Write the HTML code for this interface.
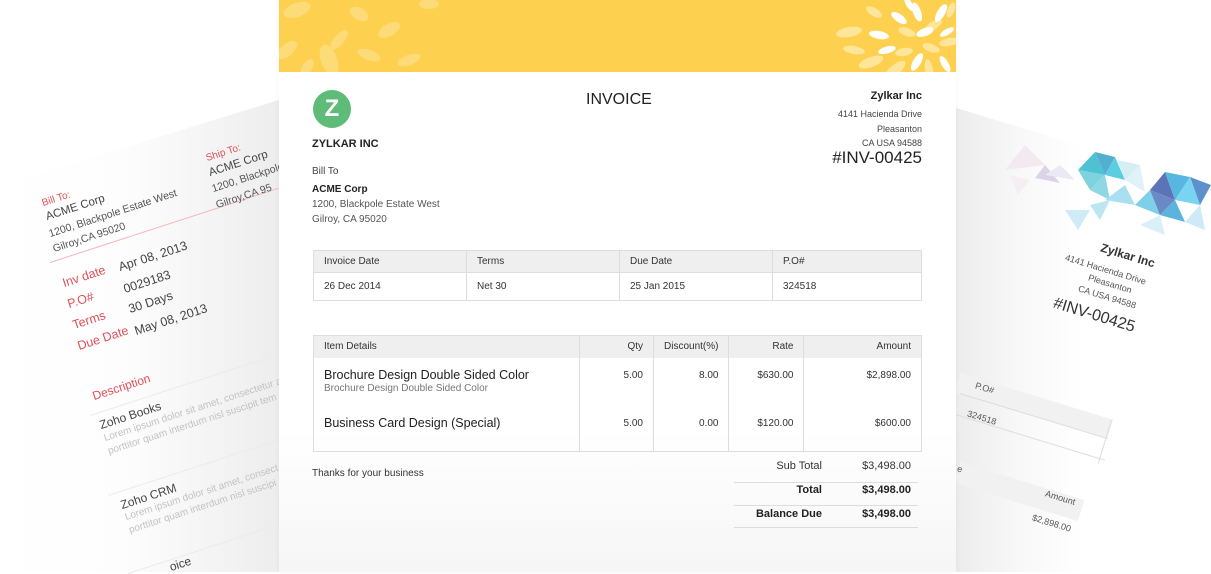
<!DOCTYPE html>
<html><head><meta charset="utf-8">
<style>
*{margin:0;padding:0;box-sizing:border-box}
html,body{width:1211px;height:572px;overflow:hidden;background:#fff;font-family:"Liberation Sans",sans-serif;color:#333}
.abs{position:absolute;white-space:nowrap}
.lp{position:absolute;left:0;top:0;width:279px;height:572px;background:linear-gradient(90deg,#fff 0%,#fdfdfd 45%,#ededed 100%);clip-path:polygon(0 186px,279px 100px,279px 572px,0 572px)}
.rp{position:absolute;left:956px;top:0;width:255px;height:572px;background:linear-gradient(90deg,#ececec 0%,#f8f8f8 25%,#fff 50%);clip-path:polygon(0 108px,255px 185px,255px 572px,0 572px)}
.rl{transform:rotate(-18deg);transform-origin:0 100%}
.rr{transform:rotate(17deg);transform-origin:0 100%}
.red{color:#e0505a}
.page{position:absolute;left:279px;top:0;width:677px;height:572px;background:linear-gradient(180deg,#fff 0%,#fff 75%,#f6f6f6 100%);box-shadow:0 0 5px rgba(0,0,0,.06)}
.hdr{position:absolute;left:0;top:0;width:677px;height:72px;background:#fdd14f;overflow:hidden}
table{border-collapse:collapse;position:absolute;font-size:10px;color:#333}
td{border:1px solid #ddd;padding:0 10px}
th{font-weight:normal;background:#efefef;border:1px solid #ddd;border-bottom:none;padding:0 10px;height:22px;text-align:left}
</style></head><body>

<div class="lp"></div>
<div class="abs" style="left:50px;top:262px;width:240px;height:1px;background:#f0b8bc;transform:rotate(-18deg);transform-origin:0 0"></div>
<div class="abs rl red" style="left:44px;top:198px;font-size:10px">Bill To:</div>
<div class="abs rl" style="left:48px;top:211px;font-size:11.5px;color:#444">ACME Corp</div>
<div class="abs rl" style="left:51px;top:228px;font-size:10.5px;color:#555">1200, Blackpole Estate West</div>
<div class="abs rl" style="left:55px;top:243px;font-size:10.5px;color:#555">Gilroy,CA 95020</div>
<div class="abs rl red" style="left:208px;top:153px;font-size:10px">Ship To:</div>
<div class="abs rl" style="left:211px;top:167px;font-size:11.5px;color:#444">ACME Corp</div>
<div class="abs rl" style="left:214px;top:183px;font-size:10.5px;color:#555">1200, Blackpole</div>
<div class="abs rl" style="left:218px;top:199px;font-size:10.5px;color:#555">Gilroy,CA 95</div>
<div class="abs rl red" style="left:65px;top:276px;font-size:12.5px">Inv date</div>
<div class="abs rl" style="left:121px;top:260px;font-size:12.5px;color:#444">Apr 08, 2013</div>
<div class="abs rl red" style="left:70px;top:297px;font-size:12.5px">P.O#</div>
<div class="abs rl" style="left:126px;top:282px;font-size:12.5px;color:#444">0029183</div>
<div class="abs rl red" style="left:75px;top:318px;font-size:12.5px">Terms</div>
<div class="abs rl" style="left:131px;top:302px;font-size:12.5px;color:#444">30 Days</div>
<div class="abs rl red" style="left:80px;top:339px;font-size:12.5px">Due Date</div>
<div class="abs rl" style="left:137px;top:324px;font-size:12.5px;color:#444">May 08, 2013</div>
<div class="abs rl red" style="left:95px;top:389px;font-size:12px">Description</div>
<div class="abs" style="left:90px;top:415px;width:200px;height:1px;background:#ebebeb;transform:rotate(-18deg);transform-origin:0 0"></div>
<div class="abs rl" style="left:102px;top:418px;font-size:12px;color:#444">Zoho Books</div>
<div class="abs rl" style="left:106px;top:433px;font-size:10px;color:#c2c2c2">Lorem ipsum dolor sit amet, consectetur a</div>
<div class="abs rl" style="left:110px;top:446px;font-size:10px;color:#c2c2c2">porttitor quam interdum nisl suscipit tem</div>
<div class="abs" style="left:108px;top:495px;width:190px;height:1px;background:#ebebeb;transform:rotate(-18deg);transform-origin:0 0"></div>
<div class="abs rl" style="left:123px;top:498px;font-size:12px;color:#444">Zoho CRM</div>
<div class="abs rl" style="left:127px;top:512px;font-size:10px;color:#c2c2c2">Lorem ipsum dolor sit amet, consect</div>
<div class="abs rl" style="left:131px;top:525px;font-size:10px;color:#c2c2c2">porttitor quam interdum nisl suscipi</div>
<div class="abs" style="left:128px;top:573px;width:170px;height:1px;background:#ebebeb;transform:rotate(-18deg);transform-origin:0 0"></div>
<div class="abs rl" style="left:172px;top:560px;font-size:12px;color:#444">oice</div>

<div class="rp"></div>
<svg class="abs" style="left:1000px;top:130px" width="211" height="110" viewBox="0 0 211 110">
<g>
<polygon points="25,15 45,35 5,40" fill="#f3eaf1"/>
<polygon points="45,35 60,53 35,48" fill="#dcd3e8"/>
<polygon points="60,35 75,50 45,45" fill="#eaeaf5"/>
<polygon points="10,45 30,50 18,65" fill="#f6eef3"/>
<polygon points="78,40 95,22 105,45" fill="#4ec2d2"/>
<polygon points="95,22 115,27 105,45" fill="#53afd0"/>
<polygon points="105,45 115,27 125,50" fill="#5ccde0"/>
<polygon points="78,40 105,45 90,60" fill="#7fd3df"/>
<polygon points="90,60 105,45 110,70" fill="#8fd8e3"/>
<polygon points="117,30 140,35 125,50" fill="#d4eef4"/>
<polygon points="105,70 125,55 135,75" fill="#a9dff0"/>
<polygon points="125,50 140,35 145,62" fill="#e0f2f8"/>
<polygon points="65,80 90,80 78,100" fill="#cdecf5"/>
<polygon points="90,75 110,70 100,90" fill="#bde6f2"/>
<polygon points="135,75 150,60 160,85" fill="#7dd0e8"/>
<polygon points="150,60 165,42 175,70" fill="#5c73b8"/>
<polygon points="165,42 190,47 175,70" fill="#58b7e0"/>
<polygon points="190,47 211,55 200,75" fill="#5d90cc"/>
<polygon points="175,70 190,47 200,75" fill="#79d4f2"/>
<polygon points="150,60 175,70 160,85" fill="#6a8ac6"/>
<polygon points="160,85 175,70 185,92" fill="#5cb4de"/>
<polygon points="185,92 200,75 205,100" fill="#cdeaf6"/>
<polygon points="140,95 160,85 165,105" fill="#d9f0f9"/>
</g></svg>
<div class="abs rr" style="left:1099px;top:240px;font-size:12px;font-weight:bold;color:#333">Zylkar Inc</div>
<div class="abs rr" style="left:1064px;top:252px;font-size:9px;color:#555">4141 Hacienda Drive</div>
<div class="abs rr" style="left:1087px;top:272px;font-size:9px;color:#555">Pleasanton</div>
<div class="abs rr" style="left:1077px;top:283px;font-size:9px;color:#555">CA USA 94588</div>
<div class="abs rr" style="left:1051px;top:294px;font-size:16px;color:#333">#INV-00425</div>
<div class="abs" style="left:960px;top:373px;width:160px;height:20px;background:#f1f1f1;transform:rotate(17deg);transform-origin:0 0"></div>
<div class="abs" style="left:960px;top:393px;width:155px;height:1px;background:#ddd;transform:rotate(17deg);transform-origin:0 0"></div>
<div class="abs" style="left:952px;top:413px;width:160px;height:1px;background:#ddd;transform:rotate(17deg);transform-origin:0 0"></div>
<div class="abs" style="left:1111px;top:420px;width:1px;height:45px;background:#ddd;transform:rotate(17deg);transform-origin:0 0"></div>
<div class="abs rr" style="left:974px;top:380px;font-size:9px;color:#555">P.O#</div>
<div class="abs rr" style="left:966px;top:408px;font-size:9px;color:#555">324518</div>
<div class="abs" style="left:960px;top:462px;width:130px;height:22px;background:#f1f1f1;transform:rotate(17deg);transform-origin:0 0"></div>
<div class="abs rr" style="left:1044px;top:488px;font-size:9px;color:#555">Amount</div>
<div class="abs rr" style="left:1031px;top:512px;font-size:9px;color:#555">$2,898.00</div>
<div class="abs rr" style="left:956px;top:463px;font-size:9px;color:#555">e</div>

<div class="page">
 <div class="hdr">
  <svg width="677" height="72" viewBox="0 0 677 72">
   <g fill="#fee08a" opacity=".7">
    <ellipse cx="18" cy="10" rx="14" ry="7" transform="rotate(-20 18 10)"/>
    <ellipse cx="80" cy="14" rx="10" ry="6" transform="rotate(30 80 14)"/>
    <ellipse cx="60" cy="40" rx="12" ry="5" transform="rotate(-50 60 40)"/>
    <ellipse cx="50" cy="60" rx="16" ry="8" transform="rotate(70 50 60)"/>
    <ellipse cx="8" cy="50" rx="12" ry="6" transform="rotate(-40 8 50)"/>
    <ellipse cx="110" cy="30" rx="12" ry="6" transform="rotate(-30 110 30)"/>
    <ellipse cx="90" cy="55" rx="12" ry="5" transform="rotate(20 90 55)"/>
    <ellipse cx="28" cy="68" rx="10" ry="5" transform="rotate(-60 28 68)"/>
    <ellipse cx="130" cy="60" rx="12" ry="5" transform="rotate(-20 130 60)"/>
    <ellipse cx="150" cy="4" rx="10" ry="5"/>
   </g>
   <g transform="translate(640 40)">
    <g fill="#fee59a">
     <ellipse cx="-70" cy="-8" rx="13" ry="5" transform="rotate(-10 -70 -8)"/>
     <ellipse cx="-65" cy="10" rx="11" ry="4" transform="rotate(10 -65 10)"/>
     <ellipse cx="-48" cy="22" rx="13" ry="5" transform="rotate(-20 -48 22)"/>
     <ellipse cx="-24" cy="30" rx="13" ry="5" transform="rotate(-40 -24 30)"/>
     <ellipse cx="15" cy="-15" rx="9" ry="4" transform="rotate(-30 15 -15)"/>
     <ellipse cx="-12" cy="-8" rx="9" ry="4" transform="rotate(20 -12 -8)"/>
     <ellipse cx="12" cy="8" rx="9" ry="4" transform="rotate(20 12 8)"/>
     <ellipse cx="-15" cy="12" rx="9" ry="4" transform="rotate(-10 -15 12)"/>
     <ellipse cx="30" cy="2" rx="10" ry="4" transform="rotate(-10 30 2)"/>
     <ellipse cx="-45" cy="-28" rx="9" ry="4" transform="rotate(30 -45 -28)"/>
     <ellipse cx="10" cy="30" rx="11" ry="4" transform="rotate(80 10 30)"/>
     <ellipse cx="32" cy="-30" rx="8" ry="3.5" transform="rotate(-70 32 -30)"/>
    </g>
    <g fill="#fff">
     <ellipse cx="-40" cy="-5" rx="10" ry="4" transform="rotate(10 -40 -5)"/>
     <ellipse cx="-20" cy="-22" rx="9" ry="4" transform="rotate(35 -20 -22)"/>
     <ellipse cx="-2" cy="-28" rx="10" ry="4" transform="rotate(70 -2 -28)"/>
     <ellipse cx="22" cy="-27" rx="10" ry="4" transform="rotate(-60 22 -27)"/>
     <ellipse cx="-32" cy="10" rx="9" ry="3.5" transform="rotate(-15 -32 10)"/>
     <ellipse cx="6" cy="-8" rx="9" ry="4" transform="rotate(-20 6 -8)"/>
     <ellipse cx="-2" cy="22" rx="10" ry="4" transform="rotate(-60 -2 22)"/>
     <ellipse cx="26" cy="24" rx="9" ry="3.5" transform="rotate(60 26 24)"/>
     <ellipse cx="-10" cy="-36" rx="8" ry="3" transform="rotate(60 -10 -36)"/>
     <ellipse cx="28" cy="-8" rx="8" ry="3" transform="rotate(-30 28 -8)"/>
    </g>
   </g>
  </svg>
 </div>
 <div class="abs" style="left:34px;top:90px;width:38px;height:38px;border-radius:50%;background:#5ebc78;color:#fff;font-weight:bold;font-size:24px;text-align:center;line-height:38px">Z</div>
 <div class="abs" style="left:33px;top:138px;font-size:11px;font-weight:bold;color:#222">ZYLKAR INC</div>
 <div class="abs" style="left:33px;top:166px;font-size:10px;color:#444">Bill To</div>
 <div class="abs" style="left:33px;top:184px;font-size:10px;font-weight:bold;color:#222">ACME Corp</div>
 <div class="abs" style="left:33px;top:199px;font-size:10px;color:#555">1200, Blackpole Estate West</div>
 <div class="abs" style="left:33px;top:214px;font-size:10px;color:#555">Gilroy, CA 95020</div>
 <div class="abs" style="left:307px;top:91px;font-size:16px;color:#222">INVOICE</div>
 <div class="abs" style="right:34px;top:90px;font-size:11px;font-weight:bold;color:#222;text-align:right">Zylkar Inc</div>
 <div class="abs" style="right:34px;top:107px;font-size:9px;color:#444;text-align:right;line-height:14.7px">4141 Hacienda Drive<br>Pleasanton<br>CA USA 94588</div>
 <div class="abs" style="right:34px;top:148px;font-size:17px;color:#222">#INV-00425</div>

 <table style="left:34px;top:250px;width:609px">
  <tr><th style="width:153px">Invoice Date</th><th style="width:153px">Terms</th><th style="width:153px">Due Date</th><th>P.O#</th></tr>
  <tr style="height:28px"><td>26 Dec 2014</td><td>Net 30</td><td>25 Jan 2015</td><td>324518</td></tr>
 </table>

 <table style="left:34px;top:335px;width:609px">
  <tr><th style="width:266px">Item Details</th><th style="width:74px;text-align:right">Qty</th><th style="width:75px;text-align:right">Discount(%)</th><th style="width:75px;text-align:right">Rate</th><th style="text-align:right">Amount</th></tr>
  <tr style="height:48px;vertical-align:top"><td style="border-bottom:none;border-top:none;padding-top:10px"><div style="font-size:12.5px;color:#222">Brochure Design Double Sided Color</div><div style="font-size:10px;color:#777;margin-top:1px">Brochure Design Double Sided Color</div></td><td style="border-bottom:none;border-top:none;text-align:right;padding-top:12px">5.00</td><td style="border-bottom:none;border-top:none;text-align:right;padding-top:12px">8.00</td><td style="border-bottom:none;border-top:none;text-align:right;padding-top:12px">$630.00</td><td style="border-bottom:none;border-top:none;text-align:right;padding-top:12px">$2,898.00</td></tr>
  <tr style="height:46px;vertical-align:top"><td style="border-top:none;padding-top:10px"><div style="font-size:12.5px;color:#222">Business Card Design (Special)</div></td><td style="border-top:none;text-align:right;padding-top:12px">5.00</td><td style="border-top:none;text-align:right;padding-top:12px">0.00</td><td style="border-top:none;text-align:right;padding-top:12px">$120.00</td><td style="border-top:none;text-align:right;padding-top:12px">$600.00</td></tr>
 </table>

 <div class="abs" style="left:33px;top:468px;font-size:10px;color:#333">Thanks for your business</div>
 <div class="abs" style="right:134px;top:460px;font-size:11px;color:#333;text-align:right">Sub Total</div>
 <div class="abs" style="right:45px;top:460px;font-size:11px;color:#333">$3,498.00</div>
 <div class="abs" style="left:455px;top:482px;width:184px;height:1px;background:#ddd"></div>
 <div class="abs" style="right:134px;top:484px;font-size:11px;font-weight:bold;color:#222">Total</div>
 <div class="abs" style="right:45px;top:484px;font-size:11px;font-weight:bold;color:#222">$3,498.00</div>
 <div class="abs" style="left:455px;top:505px;width:184px;height:1px;background:#ddd"></div>
 <div class="abs" style="right:134px;top:508px;font-size:11px;font-weight:bold;color:#222">Balance Due</div>
 <div class="abs" style="right:45px;top:508px;font-size:11px;font-weight:bold;color:#222">$3,498.00</div>
 <div class="abs" style="left:455px;top:527px;width:184px;height:1px;background:#ddd"></div>
</div>
</body></html>
